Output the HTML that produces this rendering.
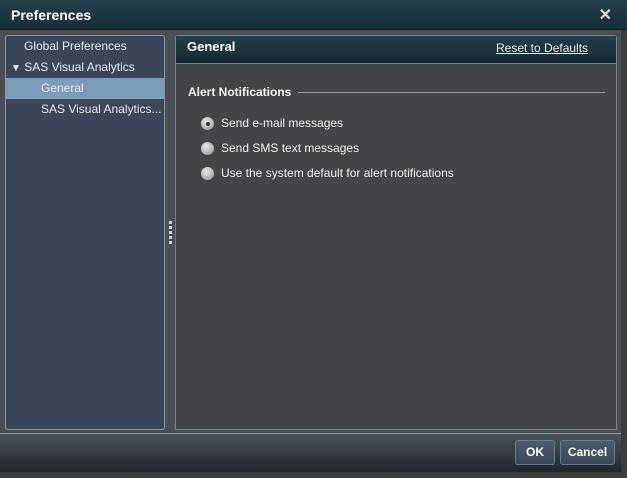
<!DOCTYPE html><html><head><style>
*{margin:0;padding:0;box-sizing:border-box}
body{width:627px;height:478px;background:#3b3d40;font-family:"Liberation Sans",Arial,sans-serif;position:relative;overflow:hidden;font-size:12px}
.abs{position:absolute}
#title{left:0;top:0;width:627px;height:30px;background:linear-gradient(#234048,#183038);color:#fff;font-weight:bold;font-size:14px;padding:7px 0 0 11px;border-bottom:1px solid #0e1a1e}
#x{right:15px;top:5px;color:#ddd;font-size:16px;font-weight:bold}
#body{left:0;top:30px;width:621px;height:403px;background:#4b4e54}
#left{left:5px;top:35px;width:160px;height:395px;background:#3b4758;border:1px solid #8a94a3;border-radius:3px}
.item{position:absolute;left:0;width:158px;height:21px;color:#e6e9ee;font-size:12px;line-height:21px}
#split{left:169px;top:221px;width:3px}
#split div{width:3px;height:3px;background:#c8d4e4;margin-bottom:2px}
#right{left:175px;top:35px;width:442px;height:395px;background:#444548;border:1px solid #7c8085;border-radius:3px 3px 0 0}
#rh{left:0;top:0;width:440px;height:28px;background:linear-gradient(#1f4048,#162a31);border-bottom:1px solid #888}
#foot{left:0;top:433px;width:621px;height:39px;background:linear-gradient(#4b545a,#22262b);border-top:1px solid #8a939c}
.btn{position:absolute;top:440px;height:25px;border:1px solid #6b7785;border-radius:3px;background:linear-gradient(#4e5b6a,#3c4656);color:#fff;font-weight:bold;font-size:12px;text-align:center;line-height:23px}
.radio{position:absolute;left:25px;width:13px;height:13px;border-radius:50%;background:radial-gradient(circle at 40% 35%,#e8e8e8,#a9a9a9 70%,#888)}
.rl{position:absolute;left:45px;color:#f0f0f0;font-size:12px}
</style></head><body>
<div id="title" class="abs">Preferences</div>
<div id="x" class="abs">✕</div>
<div id="body" class="abs"></div>
<div id="left" class="abs">
<div class="item" style="top:0;padding-left:18px">Global Preferences</div>
<div class="item" style="top:21px;padding-left:5px"><span style="font-size:10px">▼</span> SAS Visual Analytics</div>
<div class="item" style="top:42px;padding-left:35px;background:#7b9dba">General</div>
<div class="item" style="top:63px;padding-left:35px">SAS Visual Analytics...</div>
</div>
<div id="split" class="abs"><div></div><div></div><div></div><div></div><div></div></div>
<div id="right" class="abs">
<div id="rh" class="abs"><span class="abs" style="left:11px;top:3px;color:#fff;font-weight:bold;font-size:13px">General</span>
<span class="abs" style="left:320px;top:5px;color:#e8edf2;text-decoration:underline;font-size:12px">Reset to Defaults</span></div>
<div class="abs" style="left:12px;top:49px;color:#f2f2f2;font-weight:bold;font-size:12px">Alert Notifications</div>
<div class="abs" style="left:122px;top:56px;width:307px;height:1px;background:#9a9a9a"></div>
<div class="radio" style="top:81px"><div style="width:4px;height:4px;background:#333;border-radius:50%;margin:4.5px"></div></div>
<div class="rl" style="top:80px">Send e-mail messages</div>
<div class="radio" style="top:106px"></div>
<div class="rl" style="top:105px">Send SMS text messages</div>
<div class="radio" style="top:131px"></div>
<div class="rl" style="top:130px">Use the system default for alert notifications</div>
</div>
<div id="foot" class="abs"></div>
<div class="btn" style="left:515px;width:40px">OK</div>
<div class="btn" style="left:560px;width:55px">Cancel</div>
</body></html>
